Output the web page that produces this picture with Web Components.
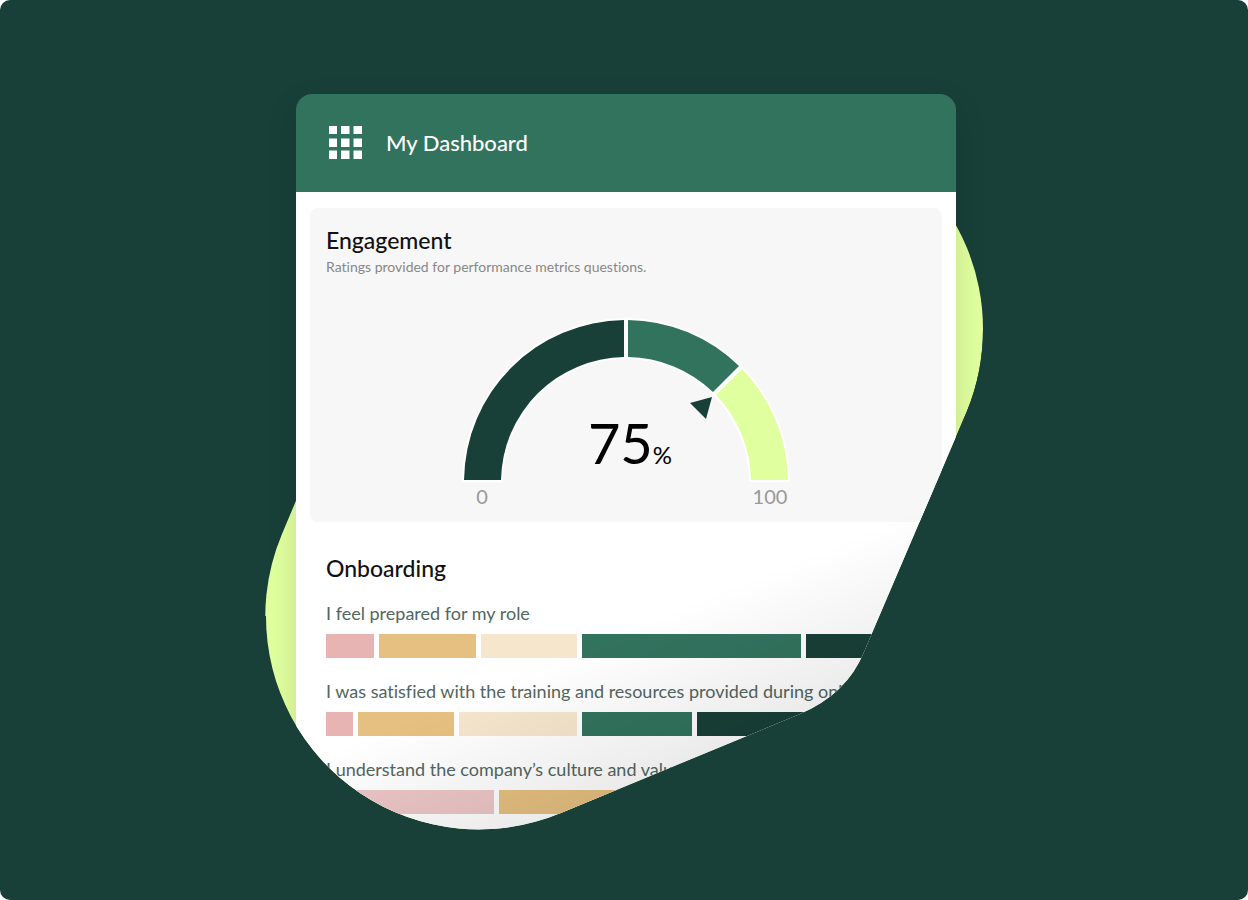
<!DOCTYPE html>
<html lang="en">
<head>
<meta charset="utf-8">
<meta name="viewport" content="width=device-width, initial-scale=1">
<title>My Dashboard</title>
<style>
	body {
		margin: 0;
		background: #fff;
		font-family: Lato, 'Liberation Sans', sans-serif;
		font-variant-ligatures: none;
	}
</style>
</head>
<body>
<promo-stage>
	<dashboard-card label="My Dashboard">
		<metric-panel heading="Engagement" note="Ratings provided for performance metrics questions.">
			<score-gauge value="75" min="0" max="100"></score-gauge>
		</metric-panel>
		<survey-section heading="Onboarding">
			<stacked-bar label="I feel prepared for my role" values="48 97 96 219 120"></stacked-bar>
			<stacked-bar label="I was satisfied with the training and resources provided during onboarding" values="27 96 118 110 229"></stacked-bar>
			<stacked-bar class="soft" label="I understand the company’s culture and values" values="168 160 96 96 60"></stacked-bar>
		</survey-section>
	</dashboard-card>
</promo-stage>

<script>
(function () {
	function define(name, render) {
		window.customElements.define(name, class extends HTMLElement {
			connectedCallback() {
				if (this.shadowRoot) return;
				this.attachShadow({ mode: 'open' }).innerHTML = render(this);
			}
		});
	}

	// Dark backdrop with the lime blob. The blob also trims the slotted card
	// along its lower edge, while the top of the card stands clear of it.
	define('promo-stage', () => `
		<style>
			:host {
				display: flex;
				justify-content: center;
				align-items: flex-start;
				box-sizing: border-box;
				min-height: 100vh;
				padding-top: 94px;
				background: #184038;
				border-radius: 10px;
				overflow: hidden;
			}
			.art {
				display: grid;
				grid-template-columns: 716px;
				clip-path: path('M-60 -60 H780 V235 H717 Q717 278 701 317 L598 558 Q581 600 534 620 L295 719 A213 213 0 0 1 0 522 H-60 Z');
			}
			.art > * { grid-area: 1 / 1; }
			svg { display: block; width: 720px; height: 740px; overflow: visible; }
			.shade { z-index: 1; pointer-events: none; }
			.content { padding: 0 26px 0 30px; }
		</style>
		<div class="art">
			<svg viewBox="0 0 720 740" aria-hidden="true">
				<path fill="#e0ff9e" d="M16 440 L137 152 L504 22 A213 213 0 0 1 717 235 Q717 278 701 317 L598 558 Q581 600 534 620 L295 719 A213 213 0 0 1 16 440 Z"/>
			</svg>
			<div class="content"><slot></slot></div>
			<svg class="shade" viewBox="0 0 720 740" aria-hidden="true">
				<defs>
					<linearGradient id="fade" gradientUnits="userSpaceOnUse" x1="435" y1="504" x2="498" y2="658">
						<stop offset="0" stop-color="#000" stop-opacity="0"/>
						<stop offset="1" stop-color="#000" stop-opacity="0.09"/>
					</linearGradient>
				</defs>
				<path fill="url(#fade)" d="M30 300 H690 V740 H30 Z"/>
			</svg>
		</div>
	`);

	define('dashboard-card', (el) => `
		<style>
			:host {
				display: block;
				border-radius: 16px;
				box-shadow: 0 12px 32px rgba(0, 0, 0, 0.12);
			}
			header {
				display: flex;
				align-items: center;
				gap: 24px;
				padding: 32px;
				background: #32735e;
				border-radius: 16px 16px 0 0;
				color: #fff;
			}
			button {
				padding: 0;
				border: 0;
				background: none;
				color: inherit;
				cursor: pointer;
			}
			svg { display: block; width: 34px; height: 34px; }
			h1 { margin: 0; font-size: 22px; line-height: 28px; font-weight: 500; }
			.body { padding: 16px 14px 32px; background: #fff; }
		</style>
		<header>
			<button type="button" aria-label="Open menu">
				<svg viewBox="0 0 34 34" fill="currentColor" aria-hidden="true">
					<path d="M1 0h8v8H1zM13 0h8.500v8H13zM25.500 0H34v8h-8.500zM1 12.500h8V21H1zM13 12.500h8.500V21H13zM25.500 12.500H34V21h-8.500zM1 24.500h8V33H1zM13 24.500h8.500V33H13zM25.500 24.500H34V33h-8.500z"/>
				</svg>
			</button>
			<h1>${el.getAttribute('label')}</h1>
		</header>
		<div class="body"><slot></slot></div>
	`);

	define('metric-panel', (el) => `
		<style>
			:host {
				display: block;
				padding: 18px 16px 12px;
				background: #f7f7f7;
				border-radius: 8px;
			}
			h2 { margin: 0 0 2px; font-size: 23px; line-height: 28px; font-weight: 500; color: #111; }
			p { margin: 0 0 40px; font-size: 14px; line-height: 22px; color: #888; }
		</style>
		<h2>${el.getAttribute('heading')}</h2>
		<p>${el.getAttribute('note')}</p>
		<slot></slot>
	`);

	define('score-gauge', (el) => `
		<style>
			:host { display: grid; justify-content: center; grid-template-columns: 328px; }
			svg { grid-area: 1 / 1; display: block; width: 100%; }
			.value {
				grid-area: 1 / 1;
				display: flex;
				align-self: end;
				justify-content: center;
				align-items: baseline;
				padding: 0 0 1px 8px;
				font-size: 56px;
				line-height: 52px;
				color: #000;
			}
			.value small { font-size: 24px; }
			.scale {
				display: flex;
				justify-content: space-between;
				font-size: 20px;
				line-height: 28px;
				color: #999;
			}
			.scale span { width: 40px; text-align: center; }
		</style>
		<svg viewBox="-164 -164 328 164" aria-hidden="true">
			<path fill="#fff" d="M-164 0A164 164 0 0 1 164 0H123A123 123 0 0 0 -123 0Z"/>
			<path fill="#184038" d="M-162 -2A162 162 0 0 1 -2 -162V-125A125 125 0 0 0 -125 -2Z"/>
			<path fill="#32735e" d="M2 -162A162 162 0 0 1 113 -116L87 -90A125 125 0 0 0 2 -125Z"/>
			<path fill="#e0ff9e" d="M116 -113A162 162 0 0 1 162 -2H125A125 125 0 0 0 90 -87Z"/>
			<path fill="#184038" d="M64 -79L86 -85L80 -63Z"/>
		</svg>
		<div class="value"><span>${el.getAttribute('value')}</span><small>%</small></div>
		<div class="scale"><span>${el.getAttribute('min')}</span><span>${el.getAttribute('max')}</span></div>
	`);

	define('survey-section', (el) => `
		<style>
			:host { display: block; padding: 32px 16px 0; }
			h2 { margin: 0 0 20px; font-size: 23px; line-height: 28px; font-weight: 500; color: #111; }
			.rows { display: grid; gap: 22px; }
		</style>
		<h2>${el.getAttribute('heading')}</h2>
		<div class="rows"><slot></slot></div>
	`);

	// Five shares of answers, from strongly disagree to strongly agree.
	define('stacked-bar', (el) => {
		const columns = el.getAttribute('values').split(' ').map((v) => `${v}fr`).join(' ');
		return `
			<style>
				:host { display: block; --low: #e7b3b3; }
				:host(.soft) { --low: #edc6c6; }
				p {
					margin: 0 0 10px;
					font-size: 18px;
					line-height: 22px;
					white-space: nowrap;
					color: #52665f;
				}
				.bar { display: grid; grid-template-columns: ${columns}; gap: 5px; height: 24px; }
				.bar i:nth-child(1) { background: var(--low); }
				.bar i:nth-child(2) { background: #e6c080; }
				.bar i:nth-child(3) { background: #f5e6cc; }
				.bar i:nth-child(4) { background: #32735e; }
				.bar i:nth-child(5) { background: #184038; }
			</style>
			<p>${el.getAttribute('label')}</p>
			<div class="bar" aria-hidden="true"><i></i><i></i><i></i><i></i><i></i></div>
		`;
	});
})();
</script>
</body>
</html>
